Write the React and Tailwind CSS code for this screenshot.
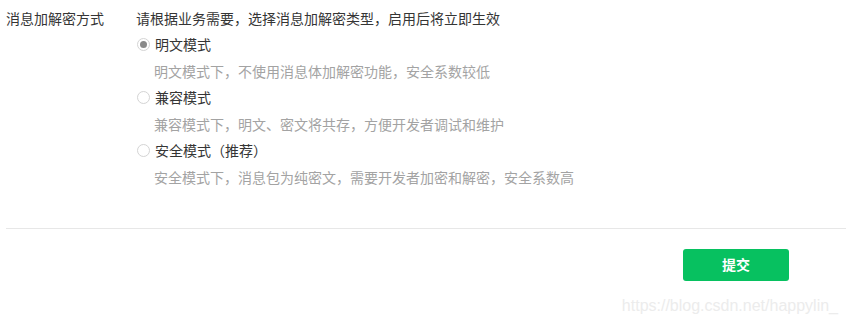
const options = [
  { name: "明文模式", desc: "明文模式下，不使用消息体加解密功能，安全系数较低", checked: true },
  { name: "兼容模式", desc: "兼容模式下，明文、密文将共存，方便开发者调试和维护", checked: false },
  { name: "安全模式（推荐）", desc: "安全模式下，消息包为纯密文，需要开发者加密和解密，安全系数高", checked: false },
];

function Radio({ checked }) {
  return (
    <span className="flex h-[13px] w-[13px] shrink-0 items-center justify-center rounded-full border border-[#d4d4d4] bg-white">
      {checked ? <span className="h-[7px] w-[7px] rounded-full bg-[#8a8a8a]" /> : null}
    </span>
  );
}

export default function App() {
  return (
    <div
      className="relative h-[325px] w-[846px] bg-white text-[14px] text-[#353535]"
      style={{ fontFamily: '"Noto Sans CJK SC", "Liberation Sans", sans-serif' }}
    >
      <div className="flex pl-[6px] pt-[5px]">
        <div className="w-[130px] shrink-0 leading-[26px]">消息加解密方式</div>
        <div className="flex flex-col">
          <div className="leading-[26.5px]">请根据业务需要，选择消息加解密类型，启用后将立即生效</div>
          {options.map((o) => (
            <div key={o.name}>
              <label className="flex h-[26.5px] items-center gap-[5px] pl-px">
                <Radio checked={o.checked} />
                <span className="text-[#353535]">{o.name}</span>
              </label>
              <div className="pl-[18px] leading-[26.5px] text-[#a3a3a3]">{o.desc}</div>
            </div>
          ))}
        </div>
      </div>

      <div className="ml-[6px] mt-[37px] h-px bg-[#e7e7e7]" />

      <div className="flex justify-end pr-[57px] pt-[20px]">
        <button className="h-[32px] w-[106px] rounded-[3px] bg-[#07c160] text-[14px] font-bold text-white">
          提交
        </button>
      </div>

      <div
        className="absolute bottom-[7px] right-[8px] text-[16px] text-[#ececec]"
        style={{ fontFamily: '"Liberation Sans", sans-serif' }}
      >
        https://blog.csdn.net/happylin_
      </div>
    </div>
  );
}
